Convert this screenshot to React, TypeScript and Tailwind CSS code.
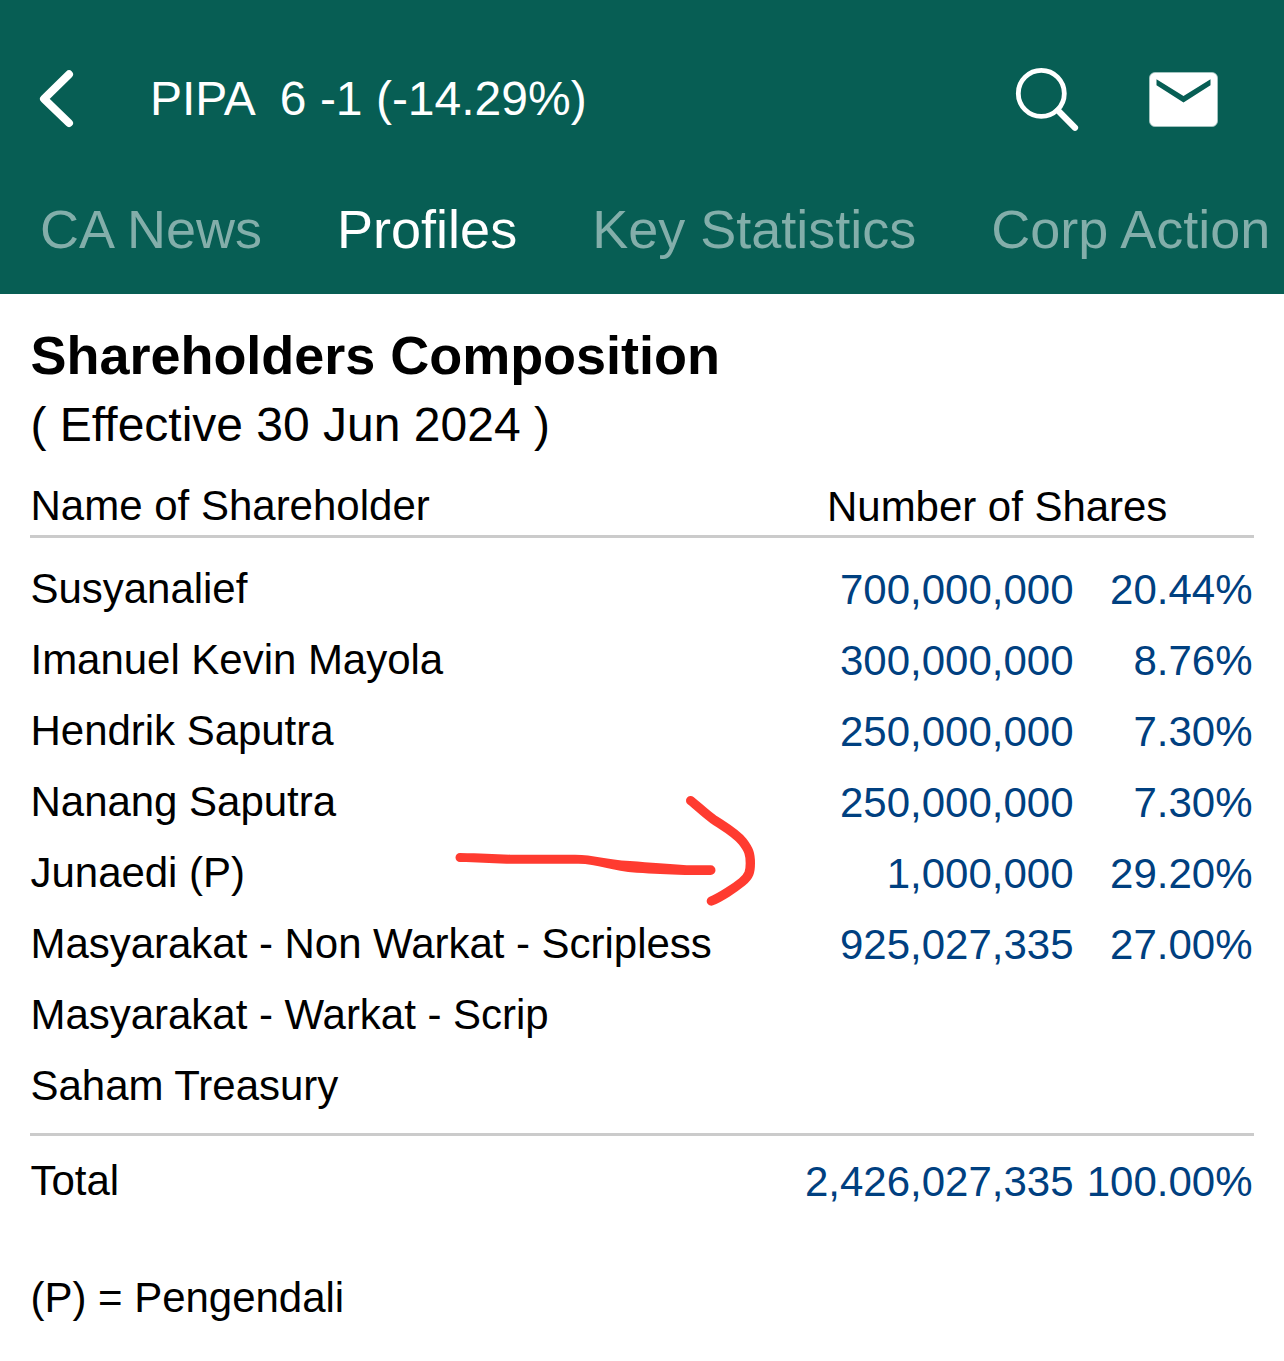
const TABS = ['CA News', 'Profiles', 'Key Statistics', 'Corp Action'];

const SHAREHOLDERS = [
    { name: 'Susyanalief', shares: '700,000,000', percent: '20.44%' },
    { name: 'Imanuel Kevin Mayola', shares: '300,000,000', percent: '8.76%' },
    { name: 'Hendrik Saputra', shares: '250,000,000', percent: '7.30%' },
    { name: 'Nanang Saputra', shares: '250,000,000', percent: '7.30%' },
    { name: 'Junaedi (P)', shares: '1,000,000', percent: '29.20%' },
    { name: 'Masyarakat - Non Warkat - Scripless', shares: '925,027,335', percent: '27.00%' },
    { name: 'Masyarakat - Warkat - Scrip', shares: '', percent: '' },
    { name: 'Saham Treasury', shares: '', percent: '' },
];

function BackIcon() {
    return (
        <svg width="40" height="64" viewBox="0 0 40 64" fill="none" stroke="#fff" strokeWidth="8" strokeLinecap="round" strokeLinejoin="round">
            <path d="M33 7.3 L8 31.8 L33 56" />
        </svg>
    );
}

function SearchIcon() {
    return (
        <svg width="66" height="66" viewBox="0 0 66 66" fill="none" stroke="#fff" strokeLinecap="round">
            <circle cx="27.3" cy="27.4" r="23" strokeWidth="4.8" />
            <path d="M44 44.5 L61 61.7" strokeWidth="6.2" />
        </svg>
    );
}

function MailIcon() {
    return (
        <svg width="70" height="56" viewBox="0 0 70 56">
            <rect x="1.5" y="1.5" width="68" height="54" rx="5.5" fill="#fff" stroke="#a9c8c4" strokeWidth="0.8" />
            <path d="M8.5 8.3 L35.5 25 L62.5 8.3 V14.3 L35.5 31.5 L8.5 14.3 Z" fill="#075e54" />
        </svg>
    );
}

// Hand-drawn marker pointing at the controlling shareholder
function Marker() {
    return (
        <svg className="absolute left-[440px] top-[780px]" width="340" height="140" viewBox="0 0 1020 420" fill="none" strokeLinecap="round" strokeLinejoin="round">
            <path
                d="M60 219 C120 220 160 223 210 224 H405 C460 224 500 239 570 243 C630 248 690 251 740 256 H812 A14.5 14.5 0 0 1 812 285 H735 C680 283 640 281 590 278 C520 274 470 251 415 251 H200 C150 250 110 247 60 246 A13.5 13.5 0 0 1 60 219 Z"
                fill="#ff3b30"
            />
            <path d="M752 62 C775 80 793 99 820 118 C850 138 889 160 908 185 C927 210 931 222 931 250 C931 275 928 288 906 306 C885 323 842 352 814 363" stroke="#ff3b30" strokeWidth="28" />
        </svg>
    );
}

type RowProps = { name: string; shares: string; percent: string };

function Row({ name, shares, percent }: RowProps) {
    return (
        <div className="flex h-[71px] pr-[1.5px] leading-[71px] whitespace-nowrap">
            <span className="grow pl-[0.5px] tracking-[-0.03px]">{name}</span>
            <span className="pt-px text-right text-[#004080]">{shares}</span>
            <span className="w-[179px] pt-px text-right text-[#004080]">{percent}</span>
        </div>
    );
}

export default function App() {
    return (
        <div className="relative w-[1284px] h-[1361px] overflow-hidden bg-white text-black font-['Liberation_Sans',Arial,sans-serif] text-[42px]">
            <header className="h-[294px] bg-[#075e54] text-white overflow-hidden">
                <div className="flex items-center h-[66px] mt-[66px] pl-9 pr-[66px]">
                    <BackIcon />
                    <h1 className="ml-[74px] grow text-5xl leading-[66px] whitespace-pre">PIPA  6 -1 (-14.29%)</h1>
                    <SearchIcon />
                    <div className="ml-[68px]">
                        <MailIcon />
                    </div>
                </div>
                <nav className="flex gap-[75px] mt-[64px] pl-10 text-[54px] leading-[66px] whitespace-nowrap">
                    {TABS.map((tab) => (
                        <span key={tab} className={tab === 'Profiles' ? 'text-white' : 'text-[#83aeaa]'}>
                            {tab}
                        </span>
                    ))}
                </nav>
            </header>

            <main className="pl-[30px] pr-[30px]">
                <h2 className="pt-[25px] pl-[0.5px] text-[54px] leading-[72px] font-bold tracking-[-0.03px]">Shareholders Composition</h2>
                <p className="pt-px pl-[0.5px] text-5xl leading-[66px]">( Effective 30 Jun 2024 )</p>
                <div className="flex h-[80px] pt-[23px] leading-[50px] border-b-3 border-[#cbcbcb]">
                    <span className="w-[797px] pl-[0.5px]">Name of Shareholder</span>
                    <span className="pt-px tracking-[-0.03px]">Number of Shares</span>
                </div>
                <div className="pt-[15px] pb-3 border-b-3 border-[#cbcbcb]">
                    {SHAREHOLDERS.map((holder) => (
                        <Row key={holder.name} {...holder} />
                    ))}
                </div>
                <div className="pt-[9px]">
                    <Row name="Total" shares="2,426,027,335" percent="100.00%" />
                </div>
                <p className="pt-[46px] pl-[0.5px] leading-[71px] tracking-[-0.03px]">(P) = Pengendali</p>
            </main>

            <Marker />
        </div>
    );
}
